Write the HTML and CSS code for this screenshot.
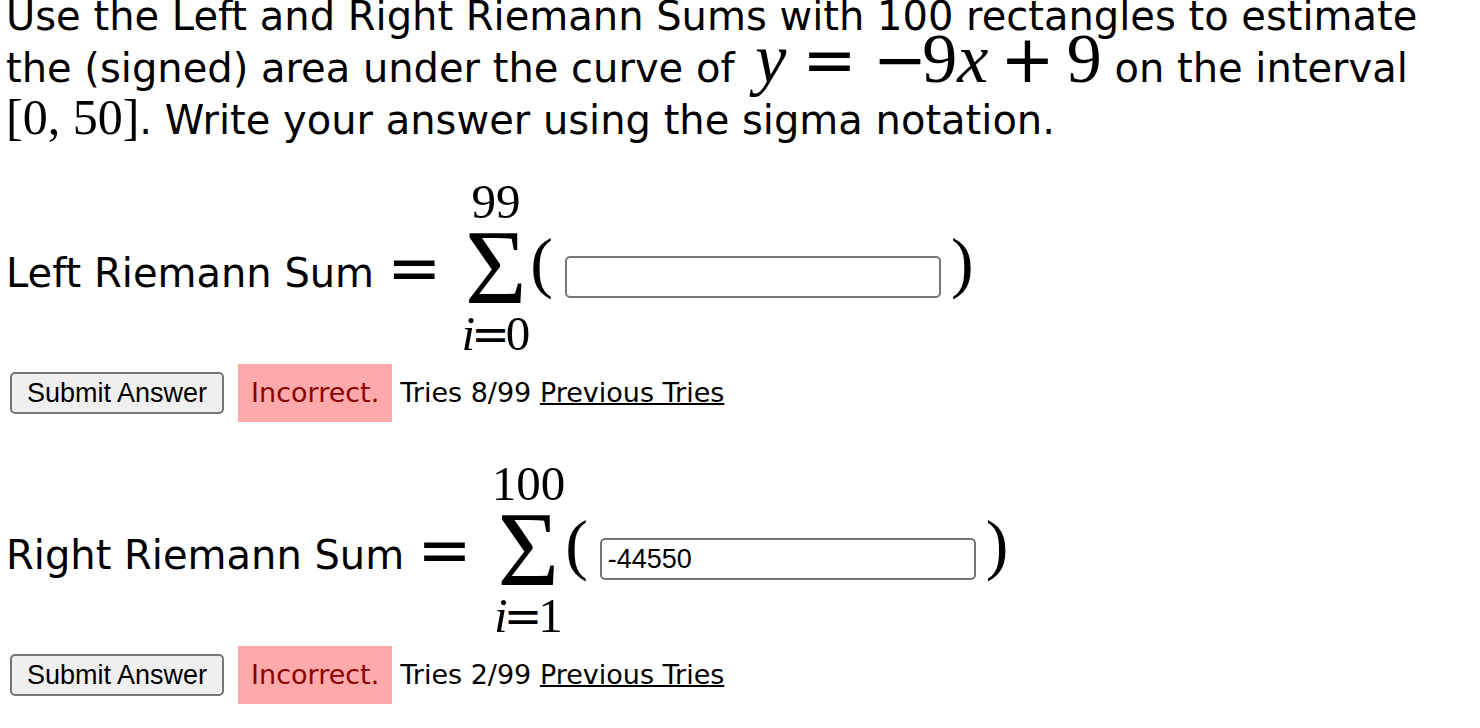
FILE: index.html
```
<!DOCTYPE html>
<html lang="en">
<head>
  <meta charset="UTF-8">
  <title>Riemann Sums</title>
  <link rel="stylesheet" href="styles.css">
</head>
<body>

<p class="question">Use the Left and Right Riemann Sums with 100 rectangles to estimate the (signed) area under the curve of <span class="equation"><i>y</i><span class="op rel">=</span><span class="op minus">−</span>9<i>x</i><span class="op plus">+</span>9</span> on the interval <span class="interval">[0, 50]</span>. Write your answer using the sigma notation.</p>

<form class="part">
  <div class="answer">
    <label for="left">Left Riemann Sum</label>
    <span class="op equals">=</span>
    <div class="sum">
      <span class="limit">99</span>
      <span class="sigma">Σ</span>
      <span class="limit"><i>i</i><span class="small-op">=</span>0</span>
    </div>
    <span class="paren">(</span>
    <input type="text" id="left">
    <span class="paren">)</span>
  </div>
  <div class="status">
    <button type="button">Submit Answer</button>
    <span class="incorrect">Incorrect.</span>
    <span class="tries">Tries 8/99 <a href="#">Previous Tries</a></span>
  </div>
</form>

<form class="part">
  <div class="answer">
    <label for="right">Right Riemann Sum</label>
    <span class="op equals">=</span>
    <div class="sum">
      <span class="limit">100</span>
      <span class="sigma">Σ</span>
      <span class="limit"><i>i</i><span class="small-op">=</span>1</span>
    </div>
    <span class="paren">(</span>
    <input type="text" id="right" value="-44550">
    <span class="paren">)</span>
  </div>
  <div class="status">
    <button type="button">Submit Answer</button>
    <span class="incorrect">Incorrect.</span>
    <span class="tries">Tries 2/99 <a href="#">Previous Tries</a></span>
  </div>
</form>

</body>
</html>
```
FILE: styles.css
```
body { margin: 0; padding: 0 6px; background: #fff; color: #000; font-family: Verdana, "DejaVu Sans", sans-serif; font-size: 40px; line-height: 52px; }
.question { margin: -10px 0 32px; }

/* math */
.equation, .interval, .limit, .sigma, .paren { font-family: "Liberation Serif", serif; }
.equation { margin-left: 8px; font-size: 70px; line-height: 0; white-space: nowrap; }
.interval { font-size: 50px; line-height: 0; white-space: nowrap; }
.op { font-family: "DejaVu Sans", sans-serif; font-size: 65px; line-height: 0; }
.rel { margin: 0 16px; }
.minus { margin-right: -5px; }
.plus { margin: 0 12px; }
.small-op { font-family: "DejaVu Sans", sans-serif; font-size: 46px; margin: 0 -4px; }

.part { margin: 0 0 38px; }
.answer { display: flex; align-items: center; height: 182px; padding-top: 4px; }
.equals { margin: 0 20px 10px 13px; }
.sum { display: flex; flex-direction: column; align-items: center; padding-bottom: 10px; }
.limit { font-size: 49px; line-height: 48px; }
.sigma { font-size: 106px; line-height: 84px; }
.paren { padding-bottom: 22px; font-size: 68px; line-height: 68px; }
input { box-sizing: border-box; width: 376px; height: 42px; margin: 8px 10px 0 12px; padding: 2px 6px; border: 2px solid #767676; border-radius: 5px; background: #fff; font-family: "Liberation Sans", sans-serif; font-size: 27px; }

.status { display: flex; align-items: center; height: 58px; padding-left: 4px; font-size: 27px; line-height: 32px; }
button { box-sizing: border-box; height: 42px; padding: 0 15px; border: 2px solid #767676; border-radius: 5px; background: #efefef; color: #000; font-family: "Liberation Sans", sans-serif; font-size: 27px; }
.incorrect { margin: 0 8px 0 14px; padding: 13px; background: #faa; color: #8b0000; }
a { color: #000; text-decoration-thickness: 2px; }
```
